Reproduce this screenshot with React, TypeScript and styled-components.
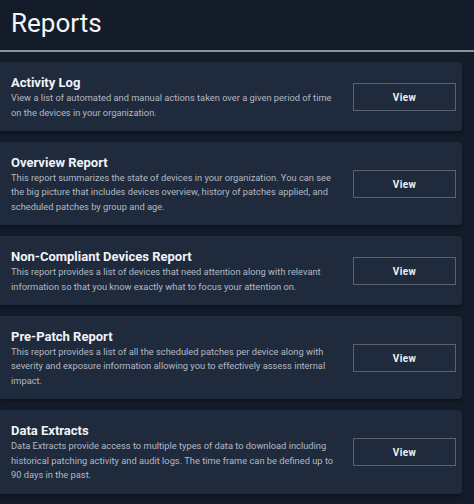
import * as React from 'react';
import styled, { createGlobalStyle } from 'styled-components';

const GlobalStyle = createGlobalStyle`
    html, body {
        margin: 0;
        padding: 0;
        background: #141b29;
    }
    body {
        font-family: Roboto, "Liberation Sans", sans-serif;
        color: #f1f3f6;
    }
`;

interface Report {
    title: string
    description: string
}

const reports: Report[] = [
    {
        title: 'Activity Log',
        description: 'View a list of automated and manual actions taken over a given period of time on the devices in your organization.',
    },
    {
        title: 'Overview Report',
        description: 'This report summarizes the state of devices in your organization. You can see the big picture that includes devices overview, history of patches applied, and scheduled patches by group and age.',
    },
    {
        title: 'Non-Compliant Devices Report',
        description: 'This report provides a list of devices that need attention along with relevant information so that you know exactly what to focus your attention on.',
    },
    {
        title: 'Pre-Patch Report',
        description: 'This report provides a list of all the scheduled patches per device along with severity and exposure information allowing you to effectively assess internal impact.',
    },
    {
        title: 'Data Extracts',
        description: 'Data Extracts provide access to multiple types of data to download including historical patching activity and audit logs. The time frame can be defined up to 90 days in the past.',
    },
];

const ReportCard = ({ title, description }: Report) => (
    <Card>
        <Text>
            <Title>{title}</Title>
            <Description>{description}</Description>
        </Text>
        <ViewButton type="button">View</ViewButton>
    </Card>
);

export default function App () {
    return (
        <Page>
            <GlobalStyle />
            <Header>
                <Heading>Reports</Heading>
            </Header>
            <List>
                {reports.map(r => <ReportCard key={r.title} {...r} />)}
            </List>
        </Page>
    );
}

const Page = styled.div`
    min-height: 504px;
    background: #141b29;
`;

const Header = styled.header`
    height: 52px;
    padding-left: 11px;
    border-bottom: 2px solid #8b919a;
    box-sizing: border-box;
    display: flex;
    align-items: center;
`;

const Heading = styled.h1`
    margin: 0;
    margin-top: -4px;
    font-size: 26px;
    font-weight: 400;
    color: #f4f6f8;
`;

const List = styled.div`
    display: flex;
    flex-direction: column;
    gap: 10.5px;
    padding: 10px 12px 12px 0;
`;

const Card = styled.section`
    display: flex;
    align-items: center;
    gap: 14px;
    padding: 12px 6px 11px 11px;
    background: #1f2a3d;
    border-radius: 0 4px 4px 0;
    box-shadow: 0 2px 4px rgba(0, 0, 0, 0.35);
`;

const Text = styled.div`
    flex: 1;
    min-width: 0;
`;

const Title = styled.h2`
    margin: 0;
    font-size: 13px;
    line-height: 17px;
    font-weight: 700;
    color: #f2f4f7;
`;

const Description = styled.p`
    margin: 0;
    font-size: 9.3px;
    line-height: 14.6px;
    color: #b3b9c2;
`;

const ViewButton = styled.button`
    flex: none;
    width: 103px;
    height: 28px;
    background: transparent;
    border: 1px solid #59626f;
    color: #eef1f5;
    font-family: Roboto, "Liberation Sans", sans-serif;
    font-size: 10px;
    font-weight: 700;
    letter-spacing: 0.4px;
    cursor: pointer;
`;
